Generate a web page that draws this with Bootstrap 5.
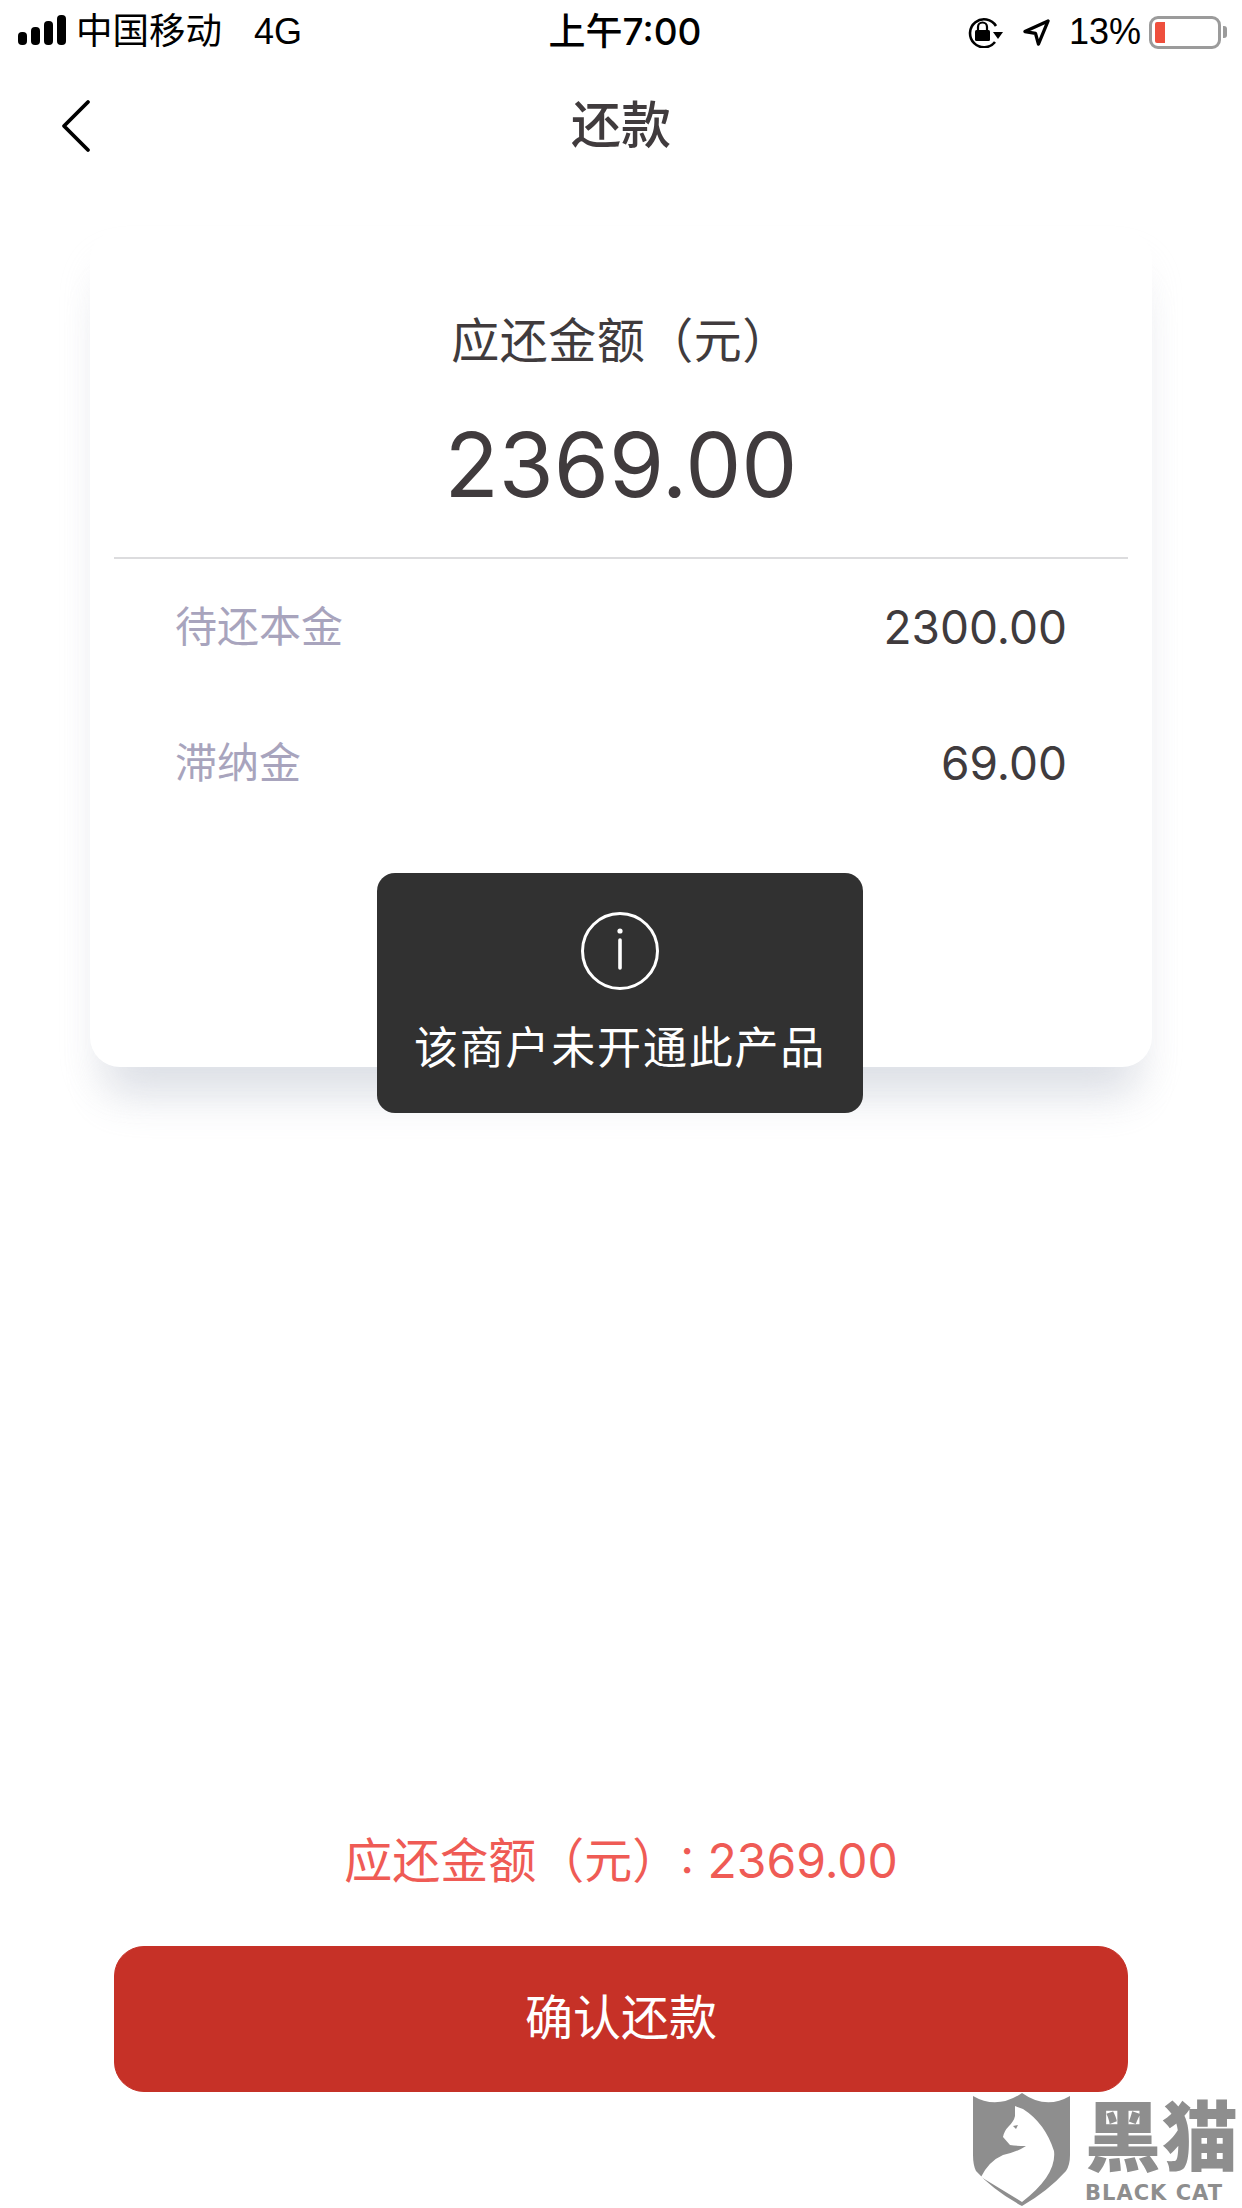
<!DOCTYPE html>
<html lang="zh-CN">
<head>
    <meta charset="UTF-8">
    <meta name="viewport" content="width=device-width, initial-scale=1, shrink-to-fit=no">
    <link rel="stylesheet" href="https://cdn.jsdelivr.net/npm/bootstrap@5.3.0/dist/css/bootstrap.min.css">
    <style>
        body {
            font-family: "Liberation Sans", "Noto Sans CJK SC", sans-serif;
            background: #fff;
            color: #403b3d;
        }
        .page-wrap { width: 1242px; height: 2208px; overflow: hidden; }
        .status-bar { height: 62px; padding: 2px 15px 0 18px; color: #000; font-size: 36px; line-height: 60px; }
        .status-side { width: 480px; }
        .carrier-text { margin-left: 10px; font-size: 36.5px; }
        .net-text { margin-left: 32px; }
        .status-time { font-family: Inter, "Noto Sans CJK SC", sans-serif; font-size: 37px; font-weight: 500; margin-left: 5px; }
        .signal-bar { width: 9px; background: #000; border-radius: 4px; }
        .signal-icon { height: 30px; gap: 4px; margin-bottom: 4px; }
        .lock-icon { margin-right: 19px; }
        .arrow-icon { margin-right: 18px; }
        .battery-box { width: 72px; height: 33px; border: 3px solid #9b9b9b; border-radius: 9px; padding: 3px; }
        .battery-fill { width: 10px; height: 100%; background: #ee4f3d; border-radius: 2px 0 0 2px; }
        .battery-nub { width: 4px; height: 12px; background: #9b9b9b; border-radius: 0 3px 3px 0; margin-left: 2px; }
        .top-nav { height: 128px; padding-left: 59px; }
        .top-title { font-size: 50px; font-weight: 500; color: #403b3d; line-height: 1; }
        .nav-center { left: 0; right: 0; top: 0; bottom: 0; pointer-events: none; }
        .bill-card {
            width: 1062px; height: 837px; margin: 40px auto 0; border: 0; border-radius: 30px; background: #fff;
            box-shadow: 0 46px 44px -18px rgba(190, 197, 208, .48), 0 26px 34px rgba(210, 212, 220, .14);
            padding: 0 24px;
        }
        .bill-head { height: 329px; border-bottom: 2px solid #dcdcde; padding-top: 86px; }
        .bill-label { font-size: 48px; line-height: 52px; letter-spacing: .5px; }
        .bill-total { font-family: Inter, sans-serif; font-size: 89px; line-height: 100px; margin-top: 47px; }
        .bill-row { padding: 0 61px; height: 136px; font-family: Inter, sans-serif; font-size: 46px; }
        .bill-key { color: #a8a4bd; font-family: "Liberation Sans", "Noto Sans CJK SC", sans-serif; font-size: 42px; }
        .toast-box {
            left: 377px; top: 873px; width: 486px; height: 240px; background: #313131; color: #fff;
            border-radius: 18px; z-index: 5; padding-top: 38px;
        }
        .toast-msg { font-size: 44px; line-height: 52px; letter-spacing: 1.8px; margin-top: 32px; }
        .foot-area { margin-top: auto; padding: 0 114px 116px; }
        .due-text { color: #ef5b55; font-family: Inter, "Noto Sans CJK SC", sans-serif; font-size: 48px; line-height: 54px; margin-bottom: 58px; }
        .pay-btn {
            height: 146px; width: 100%; background: #c63127; border-color: #c63127; color: #fff;
            font-size: 48px; border-radius: 30px;
        }
        .mark-box { left: 973px; top: 2093px; width: 269px; z-index: 6; color: #8e8e8e; }
        .mark-cn { font-size: 76px; line-height: 76px; font-weight: 900; letter-spacing: 1px; white-space: nowrap; }
        .mark-en { font-family: "DejaVu Sans", sans-serif; font-size: 21px; line-height: 22px; font-weight: 700; letter-spacing: 1px; white-space: nowrap; margin-top: 5px; }
        .mark-text { margin-left: 14px; padding-top: 8px; }
    </style>
    <title>还款</title>
</head>
<body>
<div class="page-wrap position-relative d-flex flex-column">

    <!-- status bar -->
    <div class="status-bar d-flex justify-content-between align-items-center">
        <div class="status-side d-flex align-items-center">
            <div class="signal-icon d-flex align-items-end">
                <span class="signal-bar" style="height: 13px"></span>
                <span class="signal-bar" style="height: 18px"></span>
                <span class="signal-bar" style="height: 24px"></span>
                <span class="signal-bar" style="height: 30px"></span>
            </div>
            <span class="carrier-text">中国移动</span>
            <span class="net-text">4G</span>
        </div>
        <div class="status-time">上午7:00</div>
        <div class="status-side d-flex align-items-center justify-content-end">
            <svg width="36" height="32" viewBox="0 0 36 32" class="lock-icon">
                <path d="M28 26A14 14 0 1 1 29 10" fill="none" stroke="#000" stroke-width="2.6"/>
                <path d="M26 16h10l-5 7z" fill="#000"/>
                <rect x="8" y="14" width="15" height="11" rx="1.5" fill="#000"/>
                <path d="M11 14v-3a4.500 4.500 0 0 1 9 0v3" fill="none" stroke="#000" stroke-width="2.2"/>
            </svg>
            <svg width="29" height="29" viewBox="0 0 30 30" class="arrow-icon">
                <path d="M27 3L3 14l11 2 3 11z" fill="none" stroke="#000" stroke-width="3.4" stroke-linejoin="round"/>
            </svg>
            <span class="me-2">13%</span>
            <div class="battery-box"><div class="battery-fill"></div></div>
            <div class="battery-nub"></div>
        </div>
    </div>

    <!-- title -->
    <div class="top-nav position-relative d-flex align-items-center">
        <svg width="32" height="56" viewBox="0 0 32 56">
            <path d="M29 4L5 28l24 24" fill="none" stroke="#000" stroke-width="3.8" stroke-linecap="round" stroke-linejoin="round"/>
        </svg>
        <div class="nav-center position-absolute d-flex align-items-center justify-content-center">
            <span class="top-title">还款</span>
        </div>
    </div>

    <!-- amount card -->
    <div class="card bill-card">
        <div class="bill-head text-center">
            <div class="bill-label">应还金额（元）</div>
            <div class="bill-total">2369.00</div>
        </div>
        <div class="bill-row d-flex justify-content-between align-items-center">
            <span class="bill-key">待还本金</span>
            <span>2300.00</span>
        </div>
        <div class="bill-row d-flex justify-content-between align-items-center">
            <span class="bill-key">滞纳金</span>
            <span>69.00</span>
        </div>
    </div>

    <div class="foot-area text-center">
        <div class="due-text">应还金额（元）: 2369.00</div>
        <button type="button" class="btn pay-btn">确认还款</button>
    </div>

    <!-- toast over the card -->
    <div class="toast-box position-absolute text-center">
        <svg width="80" height="80" viewBox="0 0 80 80" class="d-block mx-auto">
            <circle cx="40" cy="40" r="37.500" fill="none" stroke="#fff" stroke-width="3"/>
            <circle cx="40" cy="20" r="2.600" fill="#fff"/>
            <path d="M40 29v28" stroke="#fff" stroke-width="3.600" stroke-linecap="round"/>
        </svg>
        <div class="toast-msg">该商户未开通此产品</div>
    </div>

    <!-- watermark -->
    <div class="mark-box position-absolute d-flex">
        <svg width="98" height="114" viewBox="0 0 98 114" class="flex-shrink-0">
            <path d="M0 3Q24 17 49 0Q73 17 97 3V62Q97 72 93 78Q75 98 49 113Q21 98 3 78Q0 72 0 62Z" fill="#8e8e8e"/>
            <path d="M42 13L50 16Q72 30 81 58Q84 82 49 109L8 84Q16 68 30 62Q44 59 53 53Q44 53 37 52L30 44Q31 38 36 33Q41 28 42 23Z" fill="#fff"/>
            <path d="M40 33l5-1-2 4z" fill="#8e8e8e"/>
        </svg>
        <div class="mark-text">
            <div class="mark-cn">黑猫</div>
            <div class="mark-en">BLACK CAT</div>
        </div>
    </div>
</div>
<script src="https://cdn.jsdelivr.net/npm/bootstrap@5.3.0/dist/js/bootstrap.bundle.min.js"></script>
</body>
</html>
